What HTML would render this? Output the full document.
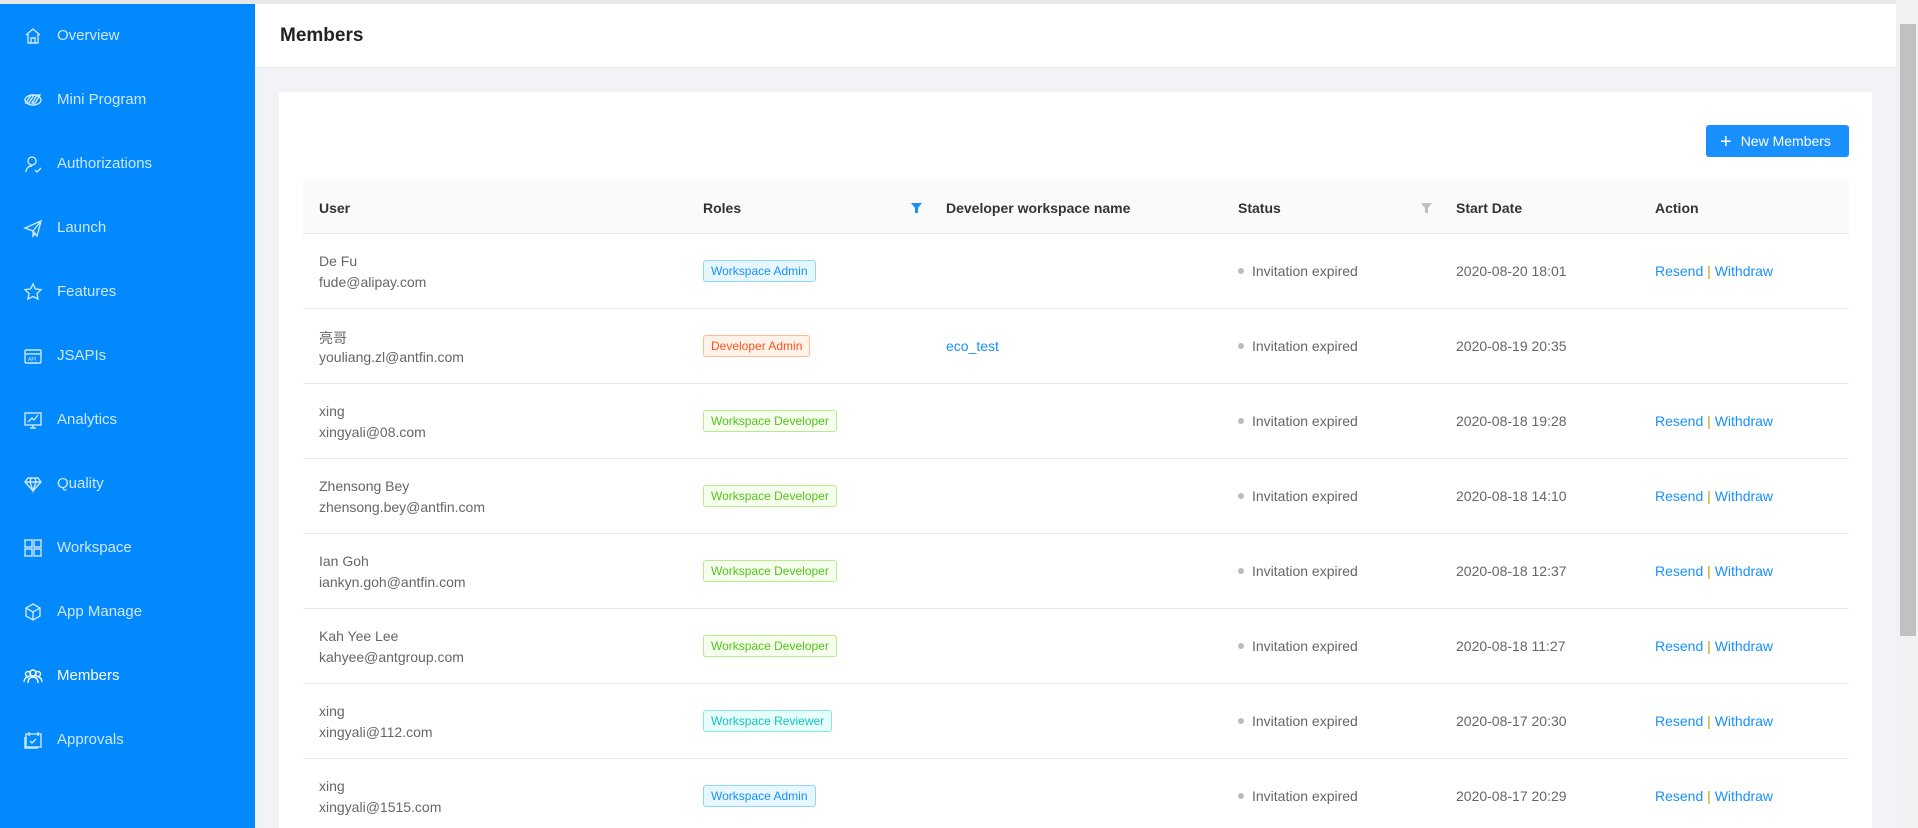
<!DOCTYPE html>
<html><head><meta charset="utf-8"><style>
*{box-sizing:border-box;margin:0;padding:0}
html{width:1918px;height:828px;overflow:hidden}
body{width:1918px;height:828px;overflow:hidden;background:#f3f3f7;font-family:"Liberation Sans","Noto Sans CJK SC",sans-serif;position:relative}
.top{position:absolute;left:0;top:0;width:1896px;height:4px;background:#e8e8e8}
.side{position:absolute;left:0;top:4px;width:255px;height:824px;background:#0289fe}
.item{position:absolute;left:0;height:30px;width:255px;color:#cfe7ff;font-size:15px;line-height:30px}
.item svg{position:absolute;left:23px;top:5px;width:20px;height:20px}
.item span{position:absolute;left:57px}
.item.act{color:#fff}
.hdr{position:absolute;left:255px;top:4px;width:1641px;height:64px;background:#fff;border-bottom:1px solid #e8e8e8}
.hdr h1{position:absolute;left:25px;top:21px;font-size:19px;font-weight:bold;color:#222}
.card{position:absolute;left:279px;top:92px;width:1593px;height:736px;background:#fff}
.btn{position:absolute;left:1706px;top:125px;width:143px;height:32px;background:#1890ff;border-radius:3px;color:#fff;font-size:14px;line-height:32px;padding-left:14px}
.btn b{font-weight:normal;font-size:20px;vertical-align:-2px;margin-right:9px}
.th{position:absolute;left:303px;top:181px;width:1546px;height:53px;background:#fafafa;border-bottom:1px solid #e8e8e8}
.t{position:absolute;font-size:14px;color:#666;white-space:nowrap}
.h{font-weight:bold;color:#333;font-size:14px}
.row{position:absolute;left:303px;width:1546px;height:75px;border-bottom:1px solid #e8e8e8}
.tag{position:absolute;left:400px;top:26px;height:22px;font-size:12px;line-height:20px;padding:0 7px;border:1px solid;border-radius:3px}
.blue{color:#1890ff;background:#e6f7ff;border-color:#91d5ff}
.red{color:#fa541c;background:#fff2e8;border-color:#ffbb96}
.green{color:#52c41a;background:#f6ffed;border-color:#b7eb8f}
.cyan{color:#13c2c2;background:#e6fffb;border-color:#87e8de}
.dot{position:absolute;left:935px;top:34px;width:6px;height:6px;border-radius:50%;background:#bbb}
a{color:#1890ff;text-decoration:none}
.sb{position:absolute;left:1896px;top:0;width:22px;height:828px;background:#f1f1f1}
.sb div{position:absolute;left:4px;top:24px;width:16px;height:612px;background:#c1c1c1}
.clip{position:absolute;left:0;top:0;width:1918px;height:828px;overflow:hidden}
</style></head><body><div class="clip">
<div class="top"></div>
<div class="side">
<div class="item" style="top:17px"><svg viewBox="0 0 20 20" fill="none" stroke="#cfe7ff" stroke-width="1.4"><path d="M3 9L10 3l7 6M5 8v9h10V8M8 17v-5h4v5"/></svg><span>Overview</span></div>
<div class="item" style="top:81px"><svg viewBox="0 0 20 20" fill="none" stroke="#cfe7ff" stroke-width="1.4"><path d="M3 13l5-8h3l-5 8zM9 13l5-8h3l-5 8z"/><ellipse cx="10" cy="10" rx="8" ry="5"/></svg><span>Mini Program</span></div>
<div class="item" style="top:145px"><svg viewBox="0 0 20 20" fill="none" stroke="#cfe7ff" stroke-width="1.4"><circle cx="9" cy="7" r="4"/><path d="M3 18c0-4 3-6 6-6M12 16l2 2 4-4"/></svg><span>Authorizations</span></div>
<div class="item" style="top:209px"><svg viewBox="0 0 20 20" fill="none" stroke="#cfe7ff" stroke-width="1.4"><path d="M2 10L18 3l-4 15-4-5zM10 13v5l3-3M18 3L10 13"/></svg><span>Launch</span></div>
<div class="item" style="top:273px"><svg viewBox="0 0 20 20" fill="none" stroke="#cfe7ff" stroke-width="1.4"><path d="M10 2l2.4 5 5.6.7-4 3.9 1 5.5L10 14.5 5 17l1-5.5-4-3.9 5.6-.7z"/></svg><span>Features</span></div>
<div class="item" style="top:337px"><svg viewBox="0 0 20 20" fill="none" stroke="#cfe7ff" stroke-width="1.4"><rect x="2" y="4" width="16" height="13" rx="1"/><path d="M2 8h16"/><text x="5" y="15" font-size="5" fill="#cfe7ff" stroke="none">API</text></svg><span>JSAPIs</span></div>
<div class="item" style="top:401px"><svg viewBox="0 0 20 20" fill="none" stroke="#cfe7ff" stroke-width="1.4"><rect x="2" y="3" width="16" height="12"/><path d="M5 12l4-4 2 2 4-5M7 18h6M10 15v3"/></svg><span>Analytics</span></div>
<div class="item" style="top:465px"><svg viewBox="0 0 20 20" fill="none" stroke="#cfe7ff" stroke-width="1.4"><path d="M5 4h10l3 4-8 9-8-9zM2 8h16M8 4l-1 4 3 9 3-9-1-4"/></svg><span>Quality</span></div>
<div class="item" style="top:529px"><svg viewBox="0 0 20 20" fill="none" stroke="#cfe7ff" stroke-width="1.4"><rect x="2" y="2" width="7" height="7"/><rect x="11" y="2" width="7" height="7"/><rect x="2" y="11" width="7" height="7"/><rect x="11" y="11" width="7" height="7"/></svg><span>Workspace</span></div>
<div class="item" style="top:593px"><svg viewBox="0 0 20 20" fill="none" stroke="#cfe7ff" stroke-width="1.4"><path d="M10 2l7 4v8l-7 4-7-4V6zM3 6l7 4 7-4M10 10v8"/></svg><span>App Manage</span></div>
<div class="item act" style="top:657px"><svg viewBox="0 0 20 20" fill="none" stroke="#fff" stroke-width="1.4"><circle cx="10" cy="7" r="3"/><circle cx="5" cy="8" r="2.5"/><circle cx="15" cy="8" r="2.5"/><path d="M5 17c0-4 2-6 5-6s5 2 5 6M1 16c0-3 2-5 4-5M19 16c0-3-2-5-4-5"/></svg><span>Members</span></div>
<div class="item" style="top:721px"><svg viewBox="0 0 20 20" fill="none" stroke="#cfe7ff" stroke-width="1.4"><rect x="3" y="4" width="15" height="13"/><path d="M6 2v4M15 2v4M7 11l2 2 4-4M2 7v11h13"/></svg><span>Approvals</span></div>
</div>
<div class="hdr"><h1>Members</h1></div>
<div class="card"></div>
<div class="btn"><b>+</b>New Members</div>
<div class="th">
<div class="t h" style="left:16px;top:19px">User</div>
<div class="t h" style="left:400px;top:19px">Roles</div>
<svg style="position:absolute;left:608px;top:22px" width="11" height="10" viewBox="0 0 11 10"><path d="M0 0h11L7 5v5H4V5z" fill="#1890ff"/></svg>
<div class="t h" style="left:643px;top:19px">Developer workspace name</div>
<div class="t h" style="left:935px;top:19px">Status</div>
<svg style="position:absolute;left:1118px;top:22px" width="11" height="10" viewBox="0 0 11 10"><path d="M0 0h11L7 5v5H4V5z" fill="#bfbfbf"/></svg>
<div class="t h" style="left:1153px;top:19px">Start Date</div>
<div class="t h" style="left:1352px;top:19px">Action</div>
</div>

<div class="row" style="top:234px"><div class="t" style="left:16px;top:19px">De Fu</div><div class="t" style="left:16px;top:40px">fude@alipay.com</div><div class="tag blue">Workspace Admin</div><div class="dot"></div><div class="t" style="left:949px;top:29px">Invitation expired</div><div class="t" style="left:1153px;top:29px">2020-08-20 18:01</div><div class="t" style="left:1352px;top:29px"><a>Resend</a> <span style="color:#c90">|</span> <a>Withdraw</a></div></div>
<div class="row" style="top:309px"><div class="t" style="left:16px;top:19px">亮哥</div><div class="t" style="left:16px;top:40px">youliang.zl@antfin.com</div><div class="tag red">Developer Admin</div><div class="t" style="left:643px;top:29px"><a>eco_test</a></div><div class="dot"></div><div class="t" style="left:949px;top:29px">Invitation expired</div><div class="t" style="left:1153px;top:29px">2020-08-19 20:35</div></div>
<div class="row" style="top:384px"><div class="t" style="left:16px;top:19px">xing</div><div class="t" style="left:16px;top:40px">xingyali@08.com</div><div class="tag green">Workspace Developer</div><div class="dot"></div><div class="t" style="left:949px;top:29px">Invitation expired</div><div class="t" style="left:1153px;top:29px">2020-08-18 19:28</div><div class="t" style="left:1352px;top:29px"><a>Resend</a> <span style="color:#c90">|</span> <a>Withdraw</a></div></div>
<div class="row" style="top:459px"><div class="t" style="left:16px;top:19px">Zhensong Bey</div><div class="t" style="left:16px;top:40px">zhensong.bey@antfin.com</div><div class="tag green">Workspace Developer</div><div class="dot"></div><div class="t" style="left:949px;top:29px">Invitation expired</div><div class="t" style="left:1153px;top:29px">2020-08-18 14:10</div><div class="t" style="left:1352px;top:29px"><a>Resend</a> <span style="color:#c90">|</span> <a>Withdraw</a></div></div>
<div class="row" style="top:534px"><div class="t" style="left:16px;top:19px">Ian Goh</div><div class="t" style="left:16px;top:40px">iankyn.goh@antfin.com</div><div class="tag green">Workspace Developer</div><div class="dot"></div><div class="t" style="left:949px;top:29px">Invitation expired</div><div class="t" style="left:1153px;top:29px">2020-08-18 12:37</div><div class="t" style="left:1352px;top:29px"><a>Resend</a> <span style="color:#c90">|</span> <a>Withdraw</a></div></div>
<div class="row" style="top:609px"><div class="t" style="left:16px;top:19px">Kah Yee Lee</div><div class="t" style="left:16px;top:40px">kahyee@antgroup.com</div><div class="tag green">Workspace Developer</div><div class="dot"></div><div class="t" style="left:949px;top:29px">Invitation expired</div><div class="t" style="left:1153px;top:29px">2020-08-18 11:27</div><div class="t" style="left:1352px;top:29px"><a>Resend</a> <span style="color:#c90">|</span> <a>Withdraw</a></div></div>
<div class="row" style="top:684px"><div class="t" style="left:16px;top:19px">xing</div><div class="t" style="left:16px;top:40px">xingyali@112.com</div><div class="tag cyan">Workspace Reviewer</div><div class="dot"></div><div class="t" style="left:949px;top:29px">Invitation expired</div><div class="t" style="left:1153px;top:29px">2020-08-17 20:30</div><div class="t" style="left:1352px;top:29px"><a>Resend</a> <span style="color:#c90">|</span> <a>Withdraw</a></div></div>
<div class="row" style="top:759px;height:69px;border-bottom:none"><div class="t" style="left:16px;top:19px">xing</div><div class="t" style="left:16px;top:40px">xingyali@1515.com</div><div class="tag blue">Workspace Admin</div><div class="dot"></div><div class="t" style="left:949px;top:29px">Invitation expired</div><div class="t" style="left:1153px;top:29px">2020-08-17 20:29</div><div class="t" style="left:1352px;top:29px"><a>Resend</a> <span style="color:#c90">|</span> <a>Withdraw</a></div></div>
<div class="sb"><div></div></div>
</div></body></html>
